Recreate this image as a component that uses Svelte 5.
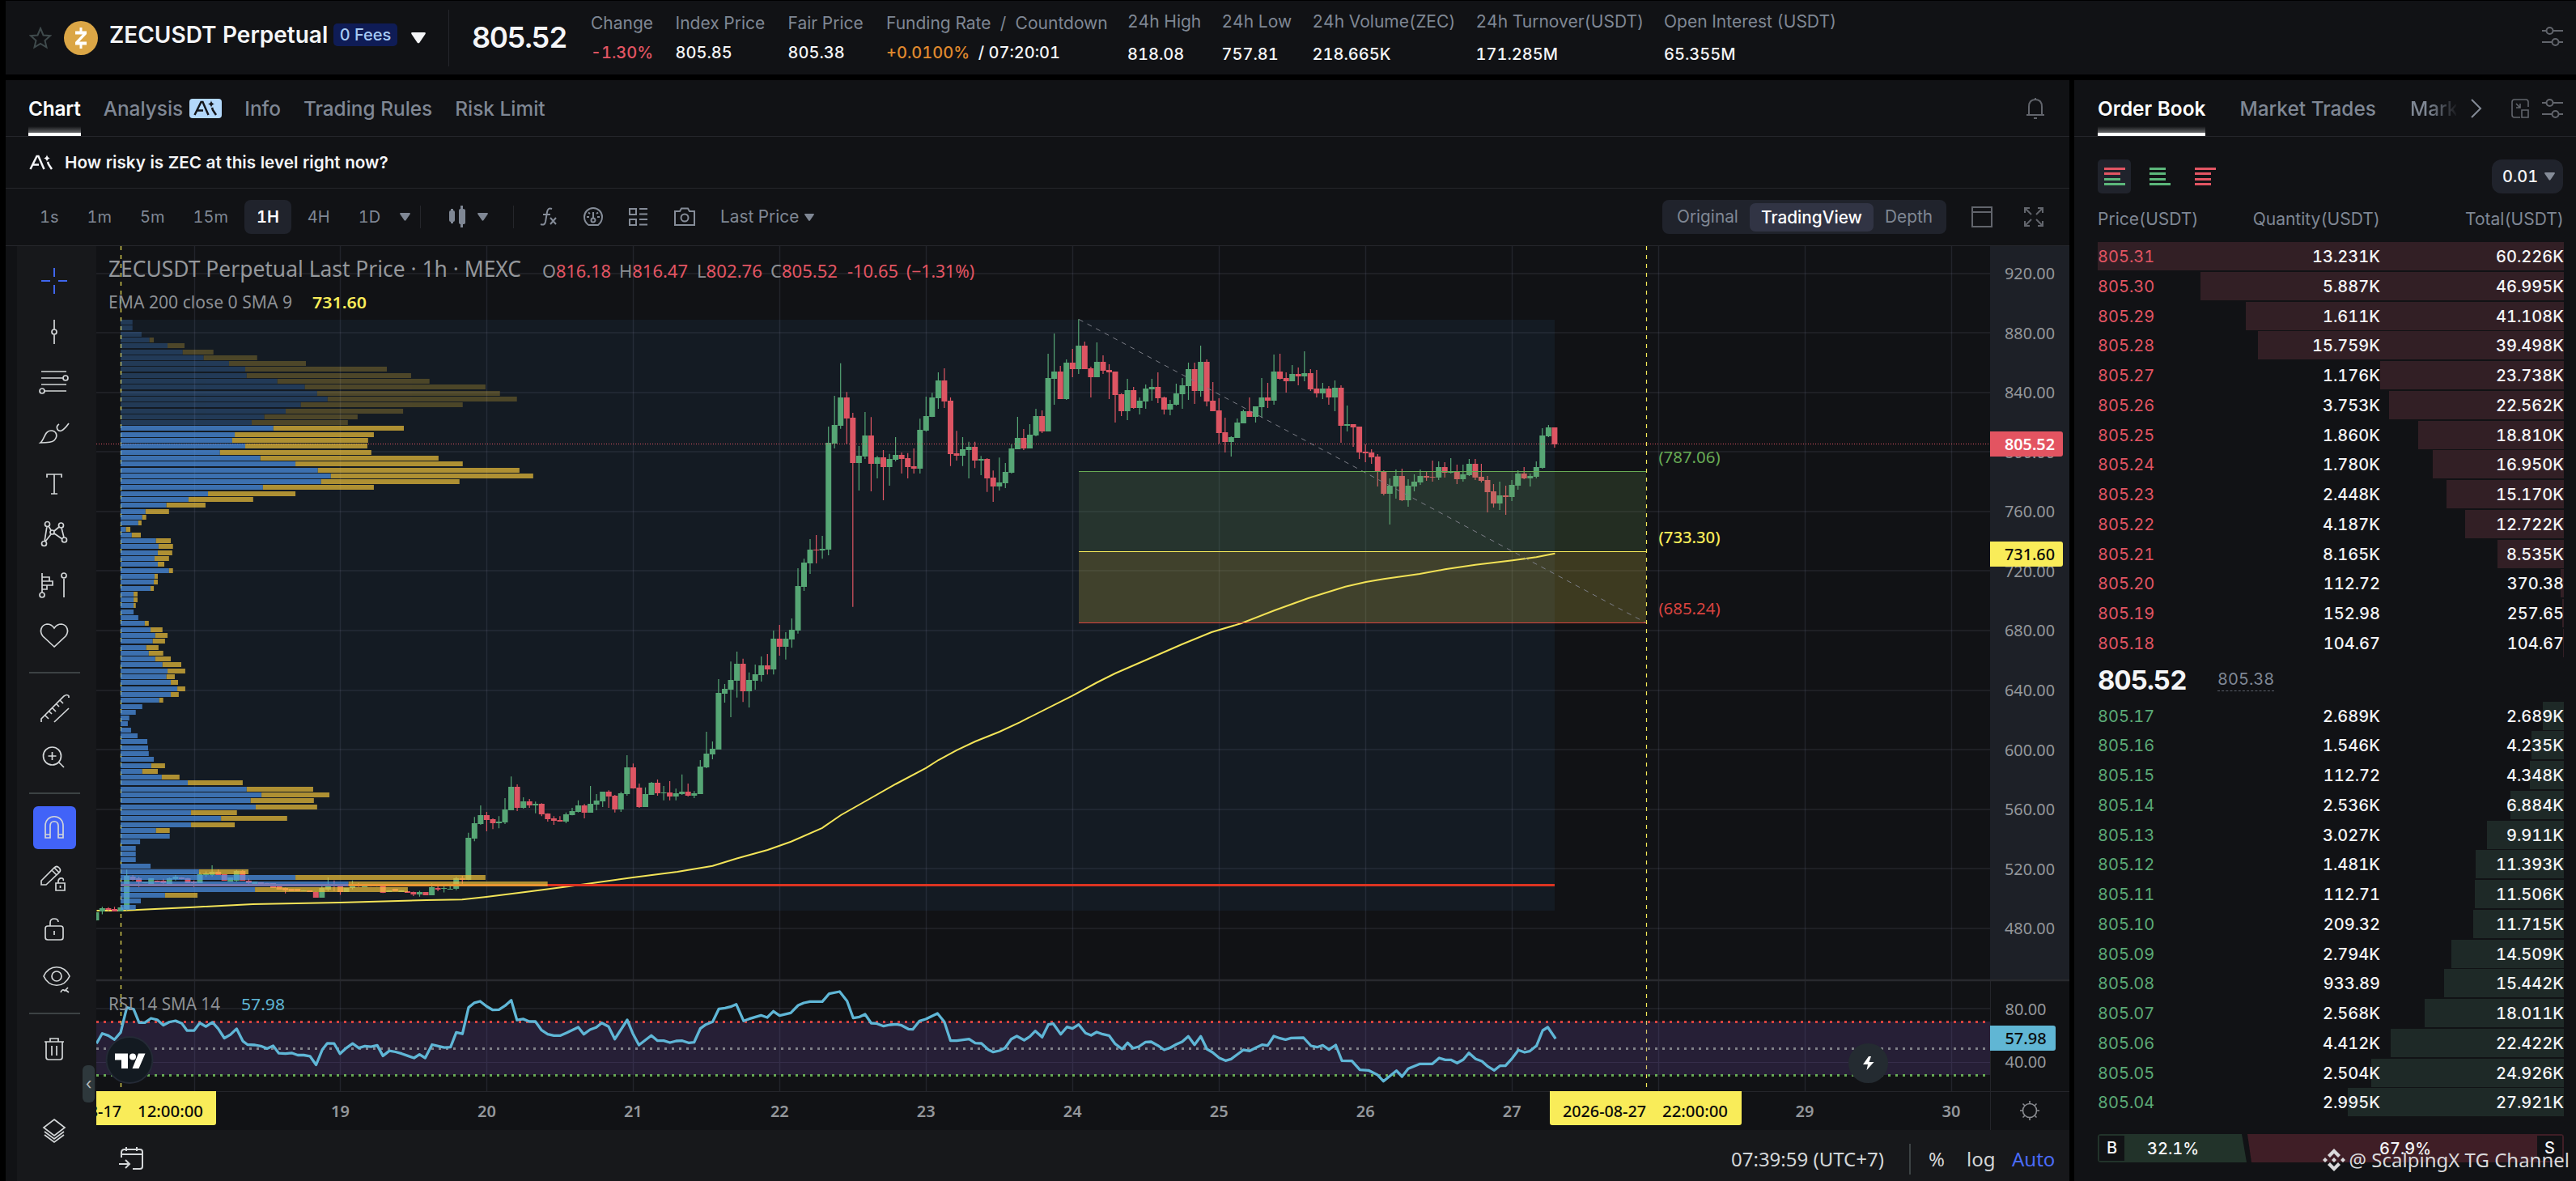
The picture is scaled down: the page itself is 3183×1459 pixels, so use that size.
<script lang="ts">
  type Bar = [string, number, number, number, number];

  const stats = [
    { label: "Change", value: "-1.30%", tone: "down" },
    { label: "Index Price", value: "805.85" },
    { label: "Fair Price", value: "805.38" },
    { label: "Funding Rate  /  Countdown", value: "  / 07:20:01", rate: "+0.0100%" },
    { label: "24h High", value: "818.08", wide: true },
    { label: "24h Low", value: "757.81", wide: true },
    { label: "24h Volume(ZEC)", value: "218.665K", wide: true },
    { label: "24h Turnover(USDT)", value: "171.285M", wide: true },
    { label: "Open Interest (USDT)", value: "65.355M", wide: true },
  ];

  const intervals = ["1s", "1m", "5m", "15m", "1H", "4H", "1D"];

  // price, quantity, total
  const asks = [
    ["805.31", "13.231K", "60.226K"],
    ["805.30", "5.887K", "46.995K"],
    ["805.29", "1.611K", "41.108K"],
    ["805.28", "15.759K", "39.498K"],
    ["805.27", "1.176K", "23.738K"],
    ["805.26", "3.753K", "22.562K"],
    ["805.25", "1.860K", "18.810K"],
    ["805.24", "1.780K", "16.950K"],
    ["805.23", "2.448K", "15.170K"],
    ["805.22", "4.187K", "12.722K"],
    ["805.21", "8.165K", "8.535K"],
    ["805.20", "112.72", "370.38"],
    ["805.19", "152.98", "257.65"],
    ["805.18", "104.67", "104.67"],
  ];
  const bids = [
    ["805.17", "2.689K", "2.689K"],
    ["805.16", "1.546K", "4.235K"],
    ["805.15", "112.72", "4.348K"],
    ["805.14", "2.536K", "6.884K"],
    ["805.13", "3.027K", "9.911K"],
    ["805.12", "1.481K", "11.393K"],
    ["805.11", "112.71", "11.506K"],
    ["805.10", "209.32", "11.715K"],
    ["805.09", "2.794K", "14.509K"],
    ["805.08", "933.89", "15.442K"],
    ["805.07", "2.568K", "18.011K"],
    ["805.06", "4.412K", "22.422K"],
    ["805.05", "2.504K", "24.926K"],
    ["805.04", "2.995K", "27.921K"],
  ];

  const amount = (s: string) =>
    s.endsWith("K") ? parseFloat(s) * 1000 : parseFloat(s);
  const deepest = Math.max(...[...asks, ...bids].map((r) => amount(r[2])));
  const depth = (s: string) => ((amount(s) / deepest) * 100).toFixed(2) + "%";

  // circle as a path, so that every icon is one path
  const ring = (x: number, y: number, r: number) =>
    `M${x - r} ${y}a${r} ${r} 0 1 0 ${2 * r} 0a${r} ${r} 0 1 0 ${-2 * r} 0`;

  const tools = [
    { name: "cross", d: "M4 20H15M25 20H36M20 4V15M20 25V36" },
    { name: "trend", d: "M20 5V17M20 23V35" + ring(20, 20, 3) },
    {
      name: "fib",
      d: "M4 7H35M4 15H31M4 23H35M8 31H35" + ring(34, 15, 3) + ring(5, 31, 3),
    },
    {
      name: "brush",
      d: "M3 32C8 28 8 17 16 17C23 17 25 24 20 29C17 32 10 32 3 32ZM26 9C21 12 24 19 29 17Q33 15 38 8",
    },
    { name: "text", d: "M11 12V8H29V12M20 8V32M16 32H24" },
    {
      name: "pattern",
      d:
        "M11 10L8 29M13 10L16 15M26 11L20 16M29 12L32 24M16 20L9 29M20 19L30 26" +
        ring(11.5, 7.5, 3) +
        ring(28.5, 9, 3) +
        ring(17.5, 17.5, 2.5) +
        ring(7.5, 31.5, 3) +
        ring(32.5, 27, 3),
    },
    {
      name: "forecast",
      d:
        "M5 5V29M5 10H14V15H5M5 15H18V20H5M5 20H11V25H5M32 12V35" +
        ring(5, 32, 3) +
        ring(32, 8, 3),
    },
    {
      name: "heart",
      d: "M20 34L6 21C1 15 4 7 11 6C15 6 18 8 20 11C22 8 25 6 29 6C36 7 39 15 34 21Z",
    },
    { name: "sep-a" },
    {
      name: "ruler",
      d: "M4 37V33L32 5Q36 2 38 5V7M20 37L38 20M9 29l4 4M14 24l3 3M18 20l4 4M23 15l3 3M27 10l4 4",
    },
    { name: "zoom", d: ring(17.5, 19, 11) + "M26 27l6 6M17.5 14v10M12.5 19h10" },
    { name: "sep-b" },
    {
      name: "magnet",
      d: "M9 33V18C9 3 31 3 31 18V33H25V18C25 11 15 11 15 18V33ZM9 29H15M25 29H31",
    },
    {
      name: "draw-lock",
      d: "M4 28V23L20 7L26 13L10 28ZM17 10L23 16M20 7Q23 4 26 7T26 13M22 26H33V35H22ZM25 26V23Q26 19 30 20Q32 21 31 23M27.500 29V32",
    },
    {
      name: "lock",
      d: "M12 16H28Q31 16 31 19V30Q31 33 28 33H12Q9 33 9 30V19Q9 16 12 16ZM15 16V12Q15 7 20 7T25 11M20 22V27",
    },
    {
      name: "eye",
      d: "M7 16C14 1 32 1 39 16C32 31 14 31 7 16Z" + ring(23, 16, 6) + "M28 36Q30 31 33 34L37 30M34 33L38 36",
    },
    { name: "sep-c" },
    {
      name: "trash",
      d: "M8 11H32M15 11V7H25V11M10 11V30Q10 33 13 33H27Q30 33 30 30V11M17 16V28M23 16V28",
    },
    {
      name: "layers",
      d: "M20 6L33 16L20 26L7 16ZM8 21L20 30L32 21M8 25L20 34L32 25",
    },
  ];

  // One candle per hour; index 0 is the 18th, 00:00.
  const DAY = 180.96;
  const HOUR = DAY / 24;
  const ORIGIN = 239.5;
  const days = Array.from({ length: 13 }, (_, i) => ORIGIN + i * DAY);
  const priceY = (p: number) => 337.5 + (920 - p) * 1.8395;
  const prices = [920, 880, 840, 800, 760, 720, 680, 640, 600, 560, 520, 480];

  // side, body top, body bottom, high, low
  const parse = (src: string): Bar[] =>
    src
      .trim()
      .split(/\s+/)
      .map((s) => {
        const n = s.slice(1).split(",").map(Number);
        return [s[0], n[0], n[1], n[2] ?? n[0], n[3] ?? n[1]];
      });

  const runs = [
    {
      start: -16,
      top: 760,
      scale: 2.243,
      bars: parse(`
        g823,846 g812,822,808,829 r812,816,809,820 r815,820,808,820 g810,821
        g722,815,704,818 r725,734,720,735 r730,740,725,753 g741,743 g729,744
        r735,740 r735,742,730,745 g730,744,727,746 g725,732,720,735 r726,732
        r728,742 r738,742,735,753 g717,742,712,742 g716,721,710,725
        g711,720,693,724 r711,720,704,720 r718,736 g727,738 g709,735,706,738
        r709,735,706,735 r736,742,730,746 g738,745 r740,744 r742,747 r743,755
        r752,760 r757,762,755,771 r759,764 r759,765 g762,764 r763,767 r766,783
        g757,783,750,783 g750,760,727,765 r748,750,735,765 r748,767,745,775
        g757,766 g748,757,735,760 r748,752,742,753 g748,753 r748,752 g745,752
        r752,769,750,770 g762,767 r759,764 g762,766 r764,769 r767,773,766,778
        g768,773,764,780 r768,775 g754,775,743,775 r755,760,750,765
        g757,759,750,768 g758,759,744,759 g729,759,725,762 r730,733,722,745
        g617,734,603,734`),
    },
    {
      start: 46,
      top: 380,
      scale: 2.063,
      bars: parse(`
        g1314,1353,1298,1360 g1294,1316,1269,1318 r1294,1306,1285,1335
        r1304,1314,1302,1329 g1310,1314,1296,1327 g1279,1312,1250,1316
        g1221,1281,1195,1281 r1221,1275,1215,1283 g1259,1275,1248,1277
        r1259,1269,1252,1275 g1265,1269,1259,1289 r1265,1292,1263,1296
        r1289,1304,1289,1310 r1302,1308,1296,1318 r1306,1310,1296,1310
        g1292,1310,1287,1314 g1283,1294,1275,1294 g1269,1285,1256,1287
        r1269,1287,1265,1302 g1265,1287,1219,1287 g1256,1267,1240,1281
        g1234,1259,1234,1273 r1234,1246,1230,1275 r1244,1279,1242,1287
        g1238,1279,1234,1285 g1172,1240,1141,1244 r1172,1226,1162,1226
        r1223,1273,1213,1275 g1240,1273,1223,1273 g1211,1242,1209,1242
        r1211,1238,1203,1244 g1236,1238,1219,1256 r1236,1246,1207,1256
        g1238,1246,1226,1256 g1234,1240,1190,1242 r1234,1244,1213,1246
        g1238,1244,1232,1250 g1170,1240,1153,1240 g1137,1172,1081,1174
        g1124,1139,1106,1151 g982,1126,947,1126 g972,984,959,1007
        g949,974,902,1044 g908,951,877,994 r908,978,895,1005 g949,978,930,1019
        g935,951,910,974 g912,937,889,953 r912,922,883,935 g844,922,823,935
        r844,864,809,887 g844,864,827,897 g821,846,792,867 g710,823,664,831
        g650,712,640,722 g617,652,590,679 r617,619,580,652 g615,619,582,640
        g345,617,303,631 g299,347,225,359 g229,301,142,309 r229,283,215,348
        r281,396,268,763 g378,396,353,466 g326,380,266,386 r326,398,279,468
        g382,398,378,435 r382,406,363,491 g386,406,373,454 g375,388,330,392
        r375,386,369,423 r384,406,371,435 r404,411,359,423 g312,411,283,423
        g276,314,227,316 g229,279,217,279 g186,231,165,258 r186,239,155,256
        r237,373,229,404 r371,378,314,390 g361,378,330,404 g355,363,342,435
        r355,390,342,409 g386,390,378,427 r386,435,384,470 r433,456,415,495
        g446,456,382,466 g419,448,396,460 g359,421,348,423`),
    },
    {
      start: 135,
      top: 360,
      scale: 3,
      bars: parse(`
        g543,585,465,585 r543,582,510,588 g531,582,492,582 g462,534,435,537
        r462,519,441,525 g321,519,231,519 g297,324,156,420 r297,399,276,399
        g264,399,252,402 r264,288,213,318 g201,288,103,306 r201,288,186,288
        r285,318,279,393 g261,318,189,318 r261,294,237,306 r291,300,270,399
        r297,384,297,486 r381,444,378,462 g366,444,324,477 r366,432,354,435
        g405,432,393,456 g360,408,345,435 g354,363,324,405 r354,396,300,414
        r393,438,390,456 g417,438,402,459 g378,420,342,423 g348,381,321,435
        g288,351,264,402 r288,369,264,417 g261,369,201,390 r261,408,252,426
        r405,444,336,444 r441,525,396,564 r522,558,468,597 g540,558,537,612
        g486,543,471,543 g444,489,438,489 r444,465,393,465 g426,465,426,486
        g393,429,321,468 r393,405,339,432 g297,405,234,420 r297,324,231,327
        r321,333,300,375 g306,333,273,333 r306,315,282,348 g303,315,222,333
        r303,363,288,369 r360,378,291,393 g360,378,339,399 r360,393,351,420
        g357,393,330,444 r357,498,348,561 g492,498,423,519 r492,504,492,576
        r501,597,501,621 r594,600,567,633 r597,615,585,639 r612,669,603,723
        r666,750,663,756 g720,750,693,864 g684,723,660,768 r684,774,657,777
        g720,774,696,798 g705,723,678,741 g684,708,660,717 r684,690,669,702
        r686,690,627,705 g651,690,630,699 r651,672,633,690 g668,672,618,675
        r669,696,642,714 g678,696,642,705 g639,681,621,684 r639,690,621,699
        r687,702,639,708 r699,744,684,819 r741,786,714,801 g756,786,705,810
        r756,762,720,828 g717,762,699,777 g675,720,663,735 r675,693,651,696
        g684,693,675,723 g651,687,630,693 g534,654,507,657 g504,537,495,540
        r504,567,504,579`),
    },
  ];

  const candles = runs.flatMap((run) =>
    run.bars.map(([side, top, bottom, high, low], i) => ({
      x: ORIGIN + (run.start + i) * HOUR,
      up: side === "g",
      top: Math.round(run.top + top / run.scale),
      bottom: Math.round(run.top + bottom / run.scale),
      high: run.top + high / run.scale,
      low: run.top + low / run.scale,
    })),
  );

  // Volume profile rows: up volume end, total end
  const profile = `367 367 392 414,426 464,511 506,591 564,712 634,847 679,1071
    683,1138 768,1189 844,1344 878,1384 907,1431 833,1281 791,1116 732,990
    697,963 757,1118 650,1035 643,1019 679,1017 609,1028 721,1214 818,1281
    880,1438 916,1476 889,1272 728,1035 576,818 522,701 461,569 403,468 394,405
    383,392 349,361 365,390 432,473 439,479 437,477 428,468 437,455 468,479
    428,437 426,437 417,426 370,381 370,381 370,376 370 383 401,412 417,450
    430,464 423,457 405,439 412,452 430,473 450,502 464,513 461,484 473,493
    491,513 473,495 441,452 394 376 358 354 363 381 408 410 412 426 419,457
    394,437 448,497 520,672 683,867 724,912 694,869 708,878 529,656 612,795
    529,650 432,470 470 388 376 376 376 417 551,688 818,1344 965,1516 706,1129
    457,547 390 376`
    .split(/\s+/)
    .map((s, i) => {
      const [up, total] = s.split(",").map((n) => (Number(n) - 334) / 2.24);
      return {
        y: Math.round(395 + i * 7.3),
        up,
        down: (total ?? up) - up,
        area: i >= 18,
      };
    });

  const ema = `119.500,1125 149,1125 239,1120.700 312.500,1117 420,1115 527,1112
    571,1111.300 601,1108 649,1102 703,1095 782,1084 837,1077 880.500,1069.800
    910.500,1060.500 948.500,1050 977.500,1039.700 1016,1022.800 1039,1007
    1069,990 1107,968.500 1144.500,948.600 1159.500,939 1182,926.800 1205,916
    1235,904 1260,892.300 1325.400,859.300 1355.700,843 1377.700,832
    1423.700,812 1460.400,796 1497,781 1533.900,770 1575,754 1616.500,739
    1662.400,724.700 1687.700,719 1709.700,715.300 1754.200,709 1785.500,703.300
    1823,697.700 1869,692.300 1898.400,688.300 1921.400,683.700`;

  const trace = (x: number, y: number, sx: number, sy: number, src: string) =>
    src
      .trim()
      .split(/\s+/)
      .map((s) => s.split(",").map(Number))
      .map(([px, py]) => `${(x + px / sx).toFixed(1)},${(y + py / sy).toFixed(1)}`)
      .join(" ");

  const rsi = [
    trace(0, 760, 2.24, 2.243, `267,1187 283,1159 300,1165 317,1176 334,1156
      351,1087 370,1092 385,1129 401,1129 418,1117 435,1121 452,1136 469,1127
      486,1124 503,1131 518,1151 537,1151 553,1130 570,1140 588,1128 604,1146
      621,1172 638,1162 655,1146 672,1180 685,1190 706,1191 722,1194 739,1201
      756,1193 772,1214 790,1215 807,1213 824,1219 841,1219 858,1222 875,1246
      892,1204 906,1186 925,1187 941,1215 959,1199 976,1187 993,1199 1010,1194
      1027,1196 1044,1192 1060,1221 1078,1207 1095,1210 1112,1215 1129,1221
      1146,1227 1161,1217 1177,1227 1196,1190 1213,1194 1230,1198 1247,1197
      1263,1156 1280,1160 1297,1087 1313,1074 1329,1070 1347,1084 1364,1094
      1381,1093 1398,1082 1415,1067 1431,1122 1448,1119 1465,1126 1482,1126
      1499,1150 1516,1161 1533,1165 1550,1165`),
    trace(700, 1060, 1.3067, 3, `0,648 19,627 28,653 38,636 48,628 57,611 68,625
      78,671 98,600 107,650 117,693 137,658 147,677 157,677 167,684 177,678
      187,677 197,685 206,683 216,632 225,617 236,607 246,559 256,556 265,551
      274,542 286,604 295,596 314,583 324,591 334,568 344,584 362,574 374,546
      383,537 393,532 413,532 424,503 441,495 453,530 463,593 473,589 482,579
      492,612 500,613 512,623 522,618 533,616 541,620 552,634 559,635 570,604
      580,597 599,576 610,607 620,677 630,677 650,671 660,686 670,687 681,710
      689,719 699,714 708,704 718,671 727,660 739,675 748,662 757,641 768,664
      778,617 786,614 798,653 808,626 817,632 827,617 838,649 847,657 856,645
      866,653 876,658 886,689 897,708 906,685 915,705 924,699 935,682 944,681
      955,695 965,711 975,703 985,690 994,681 1004,661 1014,692 1024,661
      1034,708 1043,720 1054,741 1064,751 1073,745 1093,711 1103,715 1114,702
      1123,692 1132,695 1142,660 1152,668 1161,673 1170,667 1190,666 1202,696
      1212,701 1221,694 1231,710 1242,693 1252,751 1268,752 1281,785 1295,787
      1309,803 1319,827 1340,788 1349,810 1359,781 1378,763 1398,763 1409,741
      1419,748 1428,748 1438,760 1448,747 1457,722 1468,745 1478,753 1488,773
      1498,787 1507,770 1516,770 1527,742 1537,712 1547,720 1555,716 1566,696`),
    trace(1800, 1180, 2.063, 3, "203,337 219,279 232,267 252,310"),
  ].join(" ");

  const fib = [
    { y: 582.5, text: "(787.06)", color: "#68ab55", base: 572 },
    { y: 681.5, text: "(733.30)", color: "#f9ec59", base: 671, strong: true },
    { y: 769.5, text: "(685.24)", color: "#d8433f", base: 759 },
  ];

  const legend = [
    { k: "O", v: "816.18", x: 670, w: 85 },
    { k: "H", v: "816.47", x: 765, w: 85 },
    { k: "L", v: "802.76", x: 861, w: 81 },
    { k: "C", v: "805.52", x: 952, w: 83 },
    { k: "", v: "-10.65", x: 1047, w: 63 },
    { k: "", v: "(−1.31%)", x: 1120, w: 84 },
  ];
</script>

{#snippet caret(size: number)}
  <svg class="caret" width={size} height={size * 0.75} viewBox="0 0 12 9">
    <path d="M1 0H11Q12.500 0 11.600 1.500L7 8.300Q6 9.500 5 8.300L.4 1.500Q-.5 0 1 0Z" fill="currentColor" />
  </svg>
{/snippet}

{#snippet sliders()}
  <svg width="28" height="28" viewBox="0 0 28 28" class="line">
    <path d={"M1 7H7M14 7H27M1 21H14M21 21H27" + ring(10.5, 7, 4) + ring(17.5, 21, 4)} />
  </svg>
{/snippet}

{#snippet aiMark(w: number)}
  <svg width={w} height={w * 0.62} viewBox="0 0 30 18.6" fill="none" stroke="currentColor" stroke-width="2.500">
    <path d="M1.500 18L9.500 2H11.500L18.500 18M5 12.500H12" />
    <path d="M23 9L24 12L28 18" />
    <path d="M22 0Q22.500 4 26 4.500Q22.500 5 22 9Q21.500 5 18 4.500Q21.500 4 22 0Z" fill="currentColor" stroke="none" />
  </svg>
{/snippet}

<div class="page">
  <header>
    <div class="symbol">
      <svg class="star" width="28" height="28" viewBox="0 0 28 28">
        <path d="M14 2L17.500 10.500L26 11.200L19.500 17L21.500 25.500L14 21L6.500 25.500L8.500 17L2 11.200L10.500 10.500Z" />
      </svg>
      <svg width="42" height="42" viewBox="0 0 42 42">
        <circle cx="21" cy="21" r="21" fill="#dba646" />
        <path d="M14 12.500H28V16L19 25.500H28V29.500H14V26L23 16.500H14ZM19.500 8H22.500V13H19.500ZM19.500 29H22.500V34H19.500Z" fill="#fff" />
      </svg>
      <h1>ZECUSDT Perpetual</h1>
      <span class="fees">0 Fees</span>
      {@render caret(18)}
    </div>
    <strong class="last">805.52</strong>
    <dl>
      {#each stats as s}
        <div class:wide={s.wide}>
          <dt>{s.label}</dt>
          <dd class={s.tone}>{#if s.rate}<span class="rate">{s.rate}</span>{/if}{s.value}</dd>
        </div>
      {/each}
    </dl>
    <div class="header-tools">{@render sliders()}</div>
  </header>

  <div class="body">
    <section class="market">
      <nav class="tabs">
        <span class="tab active">Chart</span>
        <span class="tab">Analysis <i class="ai">{@render aiMark(30)}</i></span>
        <span class="tab">Info</span>
        <span class="tab">Trading Rules</span>
        <span class="tab">Risk Limit</span>
        <svg class="line bell" width="28" height="28" viewBox="0 0 28 28">
          <path d="M3 22H25M6 22V12Q6 3 14 3T22 12V22M14 1V3M12 26H16" />
        </svg>
      </nav>

      <div class="question">
        {@render aiMark(30)}
        <span>How risky is ZEC at this level right now?</span>
      </div>

      <div class="toolbar">
        <div class="intervals">
          {#each intervals as t}
            <span class:on={t === "1H"}>{t}</span>
          {/each}
          {@render caret(13)}
        </div>
        <div class="kind">
          <svg width="22" height="28" viewBox="0 0 22 28" fill="currentColor">
            <path d="M0 8Q0 6 2 6V4H5V6Q7 6 7 8V18Q7 20 5 20V22H2V20Q0 20 0 18ZM12 6Q12 4 14 4V0H17V4Q20 4 20 6V21Q20 23 17 23V27H14V23Q12 23 12 21Z" />
          </svg>
          {@render caret(13)}
        </div>
        <div class="actions">
          <svg width="24" height="26" viewBox="0 0 24 26">
            <path d="M16 3Q11 1 10 7L8 19Q7 24 2 22M5 10H14M14 14L21 22M21 14L14 22" />
          </svg>
          <svg width="26" height="26" viewBox="0 0 26 26">
            <path d={"M7 23H19Q24 19 24 13A11 11 0 1 0 2 13Q2 19 7 23M13 14V7M5 13H8M18 13H21M7 7.500L9 9M19 7.500L17 9" + ring(13, 17, 2.5)} />
          </svg>
          <svg width="26" height="26" viewBox="0 0 26 26">
            <path d="M2 3H10V10H2ZM2 16H10V23H2ZM14 3H24M14 9.500H24M14 16H24M14 22.500H24" />
          </svg>
          <svg width="28" height="26" viewBox="0 0 28 26">
            <path d={"M2 6H8L10 2.500H18L20 6H26V23H2Z" + ring(14, 14, 4.5)} />
          </svg>
          <span>Last Price</span>
          {@render caret(12)}
        </div>
        <div class="views">
          <span>Original</span><span class="on">TradingView</span><span>Depth</span>
        </div>
        <svg class="line" width="28" height="28" viewBox="0 0 28 28">
          <path d="M2 2H26V26H2ZM2 8H26" />
        </svg>
        <svg class="line expand" width="26" height="26" viewBox="0 0 26 26">
          <path d="M2 8V2H8M2 2L10 10M18 2H24V8M24 2L16 10M2 18V24H8M2 24L10 16M24 18V24H18M24 24L16 16" />
        </svg>
      </div>

      <div class="workspace">
        <aside>
          {#each tools as tool}
            {#if tool.d}
              <span class="tool {tool.name}">
                <svg width="40" height="40" viewBox="0 0 40 40"><path d={tool.d} /></svg>
              </span>
            {:else}
              <hr class={tool.name} />
            {/if}
          {/each}
          <span class="handle">‹</span>
        </aside>

        <div class="chart">
          <svg class="plot" width="2438" height="1092" viewBox="119 304 2438 1092">
            <rect x="149" y="395" width="1772" height="730" fill="#141b23" />

            <g class="grid">
              {#each days as x}
                <path d="M{Math.round(x)}.500 304V1348" />
              {/each}
              {#each prices as p}
                <path d="M119 {Math.round(priceY(p))}H2459" />
              {/each}
              <path d="M119 1246H2459" />
            </g>

            <path d="M149.500 304V1348M2034.500 304V1348" stroke="#f9ec59" stroke-width="1.200" stroke-dasharray="5 6" />

            <polyline points={ema} fill="none" stroke="#f3e458" stroke-width="2" />

            {#each candles as c}
              <path
                class={c.up ? "up" : "down"}
                d="M{(c.x - 0.6).toFixed(1)} {c.high.toFixed(1)}h1.200V{c.low.toFixed(1)}h-1.200ZM{(c.x - 3.5).toFixed(1)} {c.top}h7V{Math.max(c.bottom, c.top + 1)}h-7Z"
              />
            {/each}

            <path d="M119 548.500H2459" stroke="#e25563" stroke-dasharray="1 2" />
            <path d="M149 1093.500H1921" stroke="#dc3421" stroke-width="3" />

            {#each profile as row}
              <g opacity={row.area ? 0.7 : 0.26}>
                <rect x="149" y={row.y} width={row.up} height="6" fill="#4d94eb" />
                <rect x={149 + row.up} y={row.y} width={row.down} height="6" fill="#f0c23b" />
              </g>
            {/each}

            <rect x="1333" y="582" width="701" height="99" fill="rgba(110, 157, 90, 0.2)" />
            <rect x="1333" y="681" width="701" height="88" fill="rgba(240, 222, 80, 0.2)" />
            <path d="M1333 394.500L2034 769.500" stroke="#7b7d86" stroke-dasharray="6 6" />
            {#each fib as f}
              <path d="M1333 {f.y}H2034" stroke={f.color} stroke-width="1.200" />
              <text x="2049.500" y={f.base} textLength="76" lengthAdjust="spacingAndGlyphs" fill={f.color} font-weight={f.strong ? 500 : 400}>{f.text}</text>
            {/each}

            <text class="title" x="134" y="342" textLength="510" lengthAdjust="spacingAndGlyphs">ZECUSDT Perpetual Last Price · 1h · MEXC</text>
            {#each legend as l}
              <text class="ohlc" x={l.x} y="342.500" textLength={l.w} lengthAdjust="spacingAndGlyphs">{l.k}<tspan fill="#e25563">{l.v}</tspan></text>
            {/each}
            <text class="study" x="134" y="381" textLength="227" lengthAdjust="spacingAndGlyphs">EMA 200 close 0 SMA 9</text>
            <text x="386" y="381" textLength="67" lengthAdjust="spacingAndGlyphs" fill="#f9ec59" font-weight="600">731.60</text>

            <!-- RSI pane -->
            <path d="M119 1211H2557" stroke="#292a2e" stroke-width="2.500" />
            <rect x="119" y="1262" width="2340" height="66" fill="#6b4da5" fill-opacity="0.23" />
            <path d="M119 1312.500H2459" stroke="#352d4a" />
            <g stroke-width="3" stroke-dasharray="3 6">
              <path d="M119 1262.500H2459" stroke="#d8433f" />
              <path d="M119 1295.500H2459" stroke="#7f8087" />
              <path d="M119 1328.500H2459" stroke="#68ab55" />
            </g>
            <polyline points={rsi} fill="none" stroke="#5fb6d6" stroke-width="3.300" stroke-linejoin="round" />
            <text class="study" x="134" y="1248" textLength="138" lengthAdjust="spacingAndGlyphs">RSI 14 SMA 14</text>
            <text x="298" y="1248" textLength="54" lengthAdjust="spacingAndGlyphs" fill="#5fb6d6">57.98</text>

            <circle cx="160" cy="1309.500" r="28.500" fill="#131a21" stroke="#242a36" stroke-width="2" />
            <path d="M142 1301.500H158V1320H150V1309.500H142ZM171 1301.500H179.500L171.500 1320H163.500Z" fill="#fff" />
            <circle cx="164" cy="1305.500" r="4" fill="#fff" />
            <circle cx="2308.500" cy="1313.500" r="24.500" fill="#242b31" />
            <path d="M2309 1305L2302 1315H2308L2306.500 1322L2315.500 1312H2309.500L2312 1305Z" fill="#fff" />

            <!-- Scales -->
            <rect x="2459" y="304" width="98" height="906" fill="#1d2027" />
            <path d="M119 1348.500H2557M2459.500 1212V1396" stroke="#24252a" />
            <g class="scale">
              {#each prices as p}
                <text x="2508" y={priceY(p) + 7.5} textLength="62" lengthAdjust="spacingAndGlyphs">{p.toFixed(2)}</text>
              {/each}
              <text x="2503" y="1254">80.00</text>
              <text x="2503" y="1319">40.00</text>
            </g>
            <path d="M2459 533H2546Q2549 533 2549 536V561Q2549 564 2546 564H2459Z" fill="#e35461" />
            <path d="M2459 669H2546Q2549 669 2549 672V697Q2549 700 2546 700H2459Z" fill="#f9ec59" />
            <path d="M2459 1267H2537Q2540 1267 2540 1270V1295Q2540 1298 2537 1298H2459Z" fill="#60b6d4" />
            <g class="tags">
              <text x="2508" y="556" fill="#fff" textLength="62" lengthAdjust="spacingAndGlyphs" font-weight="600">805.52</text>
              <text x="2508" y="692" textLength="62" lengthAdjust="spacingAndGlyphs">731.60</text>
              <text x="2503" y="1290">57.98</text>
            </g>

            <g class="dates">
              {#each days as x, i}
                {#if i > 0 && i !== 10}
                  <text {x} y="1380">{18 + i}</text>
                {/if}
              {/each}
            </g>
            <path d="M30 1348H267V1387Q267 1390 264 1390H30Z" fill="#f9ec59" />
            <path d="M1915 1348H2152V1387Q2152 1390 2149 1390H1918Q1915 1390 1915 1387Z" fill="#f9ec59" />
            <g class="stamp">
              <text x="47" y="1380" textLength="103" lengthAdjust="spacingAndGlyphs">2026-08-17</text>
              <text x="170" y="1380" textLength="81" lengthAdjust="spacingAndGlyphs">12:00:00</text>
              <text x="1931" y="1380" textLength="103" lengthAdjust="spacingAndGlyphs">2026-08-27</text>
              <text x="2054" y="1380" textLength="81" lengthAdjust="spacingAndGlyphs">22:00:00</text>
            </g>
            <path
              d={ring(2508, 1372, 8.5) +
                "M2508 1360V1363M2508 1381V1384M2496 1372H2499M2517 1372H2520M2499.500 1363.500L2502 1366M2514 1378L2516.500 1380.500M2499.500 1380.500L2502 1378M2514 1366L2516.500 1363.500"}
              fill="none"
              stroke="#8a8c91"
              stroke-width="1.600"
            />
          </svg>

          <div class="bottom">
            <svg width="32" height="30" viewBox="0 0 32 30">
              <path d="M4 13V7Q4 3 8 3H27Q30 3 30 6V24Q30 27 27 27H18M4 9H30M10 0V5M23 0V5M1 21H14M9 16L14 21L9 26" />
            </svg>
            <span class="clock">07:39:59 (UTC+7)</span>
            <i></i>
            <span class="percent">%</span>
            <span class="log">log</span>
            <span class="auto">Auto</span>
          </div>
        </div>
      </div>
    </section>

    <section class="book">
      <nav class="tabs">
        <span class="tab active">Order Book</span>
        <span class="tab">Market Trades</span>
        <span class="tab cut">Mark</span>
        <svg class="chevron" width="24" height="26" viewBox="0 0 24 26">
          <path d="M4 2L15 13L4 24" />
        </svg>
        <svg class="line" width="24" height="26" viewBox="0 0 24 26">
          <path d="M12 24H5Q2 24 2 21V5Q2 2 5 2H19Q22 2 22 5V11M14 15H22V24H14ZM7 7L12 12M12 7V12H7" stroke-width="1.600" />
        </svg>
        {@render sliders()}
      </nav>

      <div class="modes">
        {#each ["rrgg", "gggg", "rrrr"] as mode, i}
          <span class="mode" class:on={i === 0}>
            {#each mode as c, row}
              <b class={c} class:long={(row === 0 && i !== 1) || (row === 3 && i !== 2)}></b>
            {/each}
          </span>
        {/each}
        <span class="step">0.01 {@render caret(13)}</span>
      </div>

      <div class="row heads">
        <span>Price(USDT)</span><span>Quantity(USDT)</span><span>Total(USDT)</span>
      </div>

      {#each asks as [price, qty, total]}
        <div class="row ask" style="--depth: {depth(total)}">
          <span>{price}</span><span>{qty}</span><span>{total}</span>
        </div>
      {/each}
      <div class="mid"><strong>805.52</strong><span>805.38</span></div>
      {#each bids as [price, qty, total]}
        <div class="row bid" style="--depth: {depth(total)}">
          <span>{price}</span><span>{qty}</span><span>{total}</span>
        </div>
      {/each}

      <div class="ratio">
        <div class="buy"><b>B</b><span>32.1%</span></div>
        <div class="sell"><span>67.9%</span><b>S</b></div>
        <div class="watermark">
          <svg width="28" height="28" viewBox="0 0 28 28" fill="currentColor">
            <path d="M14 0L22 8L19 11L14 6L9 11L6 8ZM3 11L6 14L3 17L0 14ZM14 11L17 14L14 17L11 14ZM25 11L28 14L25 17L22 14ZM9 17L14 22L19 17L22 20L14 28L6 20Z" />
          </svg>
          <span>@ ScalpingX TG Channel</span>
        </div>
      </div>
    </section>
  </div>
</div>

<style>
  :global(body) {
    margin: 0;
    background: #000;
  }
  .page {
    box-sizing: border-box;
    width: 3183px;
    height: 1459px;
    padding: 1px 0 0 7px;
    overflow: hidden;
    background: #000;
    color: #f4f5f7;
    font-family: Inter, "Liberation Sans", sans-serif;
    font-size: 20px;
    line-height: 24px;
    font-variant-numeric: tabular-nums;
  }
  svg {
    display: block;
    flex: none;
  }
  .line {
    fill: none;
    stroke: #62656c;
    stroke-width: 2;
  }
  header {
    display: flex;
    height: 91px;
    background: #111215;
  }
  .symbol {
    display: flex;
    align-items: center;
    box-sizing: border-box;
    width: 548px;
    height: 70px;
    margin: 11px 0;
    padding-left: 29px;
    border-right: 1px solid #25262b;
  }
  .star {
    margin-right: 15px;
    fill: none;
    stroke: #3f4a4c;
    stroke-width: 2;
  }
  h1 {
    width: 277px;
    margin: 0 0 9px 14px;
    font-size: 28px;
    line-height: 32px;
    font-weight: 600;
    white-space: nowrap;
  }
  .fees {
    box-sizing: border-box;
    width: 79px;
    margin: 0 17px 8px 0;
    border-radius: 5px;
    background: #0f1c56;
    color: #a6cbf5;
    font-weight: 500;
    line-height: 28px;
    text-align: center;
  }
  .last {
    width: 145px;
    padding-left: 28px;
    font-size: 36px;
    line-height: 90px;
    font-weight: 600;
    letter-spacing: -1.500px;
  }
  dl {
    display: grid;
    grid-template-columns: 104.500px 139px 121.500px 298px 116.500px 112px 202px 232.500px auto;
    margin: 0 0 0 2px;
  }
  dl div {
    padding-top: 16px;
  }
  dl .wide {
    padding-top: 14px;
  }
  dt,
  dd {
    white-space: pre;
  }
  dt {
    color: #7f8794;
    font-size: 21px;
  }
  dd {
    margin: 12px 0 0;
    font-weight: 500;
  }
  .wide dd {
    margin-top: 16px;
  }
  .rate {
    color: #e08a2e;
  }
  dd.down {
    color: #e25563;
  }
  .header-tools {
    margin: 30px 15px 0 auto;
  }
  .body {
    display: flex;
    gap: 6px;
    height: 1360px;
    margin-top: 7px;
  }
  .market {
    width: 2550px;
    background: #111215;
  }
  .tabs {
    display: flex;
    align-items: center;
    gap: 28px;
    height: 69px;
    padding: 0 28px;
    border-bottom: 1px solid #25262b;
    color: #7f8794;
    font-size: 24.400px;
    font-weight: 500;
    white-space: nowrap;
  }
  .tab {
    display: flex;
    align-items: center;
    gap: 8px;
    box-sizing: border-box;
    height: 69px;
  }
  .tab.active {
    border-bottom: 4px solid #fff;
    padding-top: 4px;
    background: linear-gradient(to top, rgba(255, 255, 255, 0.35), transparent 8px);
    color: #fff;
    font-weight: 600;
    letter-spacing: -0.2px;
  }
  .ai {
    display: grid;
    place-items: center;
    width: 40px;
    height: 24px;
    border-radius: 4px;
    background: #b3d8fb;
    color: #14161b;
  }
  .bell {
    margin-left: auto;
  }
  .question {
    display: flex;
    align-items: center;
    gap: 14px;
    height: 63px;
    padding-left: 29px;
    border-bottom: 1px solid #25262b;
    font-size: 20.700px;
    font-weight: 600;
  }
  .toolbar {
    display: flex;
    align-items: center;
    height: 70px;
    border-bottom: 1px solid #25262b;
    color: #7f8794;
    font-size: 20.800px;
  }
  .intervals {
    display: flex;
    align-items: center;
    gap: 5px;
    width: 485px;
    height: 28px;
    padding-left: 27px;
    border-right: 1px solid #25262b;
    font-size: 20px;
  }
  .intervals span {
    padding: 0 15px;
    border-radius: 8px;
    line-height: 42px;
  }
  .intervals .on {
    background: #20232c;
    color: #fff;
    font-weight: 600;
  }
  .intervals .caret {
    margin-left: 4px;
  }
  .kind {
    display: flex;
    align-items: center;
    gap: 13px;
    width: 79px;
    height: 28px;
    padding-left: 35px;
    border-right: 1px solid #25262b;
  }
  .actions {
    display: flex;
    align-items: center;
    margin-left: 31px;
    fill: none;
    stroke: #858c98;
    stroke-width: 2;
  }
  .actions svg {
    margin-right: 30px;
  }
  .actions span {
    fill: currentColor;
    stroke: none;
  }
  .actions .caret {
    margin: 0 0 0 7px;
    stroke: none;
  }
  .views {
    display: flex;
    align-items: center;
    justify-content: space-between;
    box-sizing: border-box;
    width: 351px;
    height: 42px;
    margin: 0 30px 0 auto;
    padding: 0 17px 0 18px;
    border-radius: 8px;
    background: #20232c;
  }
  .views .on {
    padding: 0 14px;
    border-radius: 7px;
    background: #313444;
    color: #fff;
    font-weight: 500;
    line-height: 35px;
  }
  .expand {
    margin: 0 31px 0 37px;
  }
  .workspace {
    display: flex;
    height: 1155px;
  }
  aside {
    display: flex;
    position: relative;
    flex-direction: column;
    align-items: center;
    box-sizing: border-box;
    width: 98px;
    margin-left: 14px;
    padding: 12px 6px 0 0;
    background: #17181b;
  }
  .tool {
    display: grid;
    place-items: center;
    width: 53px;
    height: 62.600px;
    fill: none;
    stroke: #d3d6d8;
    stroke-width: 1.700;
  }
  .tool.cross {
    stroke: #3f66ee;
    stroke-width: 2;
  }
  .tool.zoom,
  .tool.ruler {
    height: 60px;
  }
  .tool.magnet {
    height: 53px;
    margin: 5px 0;
    border-radius: 6px;
    background: #4163f8;
  }
  .tool.layers {
    margin-top: 39px;
  }
  hr {
    width: 63px;
    height: 2px;
    margin: 13px 0;
    border: 0;
    background: #3c4244;
  }
  hr.sep-b {
    margin: 14px 0 10px;
  }
  hr.sep-c {
    margin: 9px 0 12px;
  }
  /* sits over the right edge of the drawing tools */
  .handle {
    position: absolute;
    top: 1012px;
    right: 2px;
    width: 15px;
    border-radius: 6px;
    background: #2e383c;
    color: #b6bbbd;
    line-height: 46px;
    text-align: center;
  }
  .chart {
    width: 2438px;
  }
  .plot,
  .bottom {
    font-family: "Noto Sans", "Open Sans", sans-serif;
  }
  .plot {
    overflow: hidden;
    font-size: 20px;
  }
  .grid {
    fill: none;
    stroke: rgba(140, 146, 175, 0.14);
    stroke-width: 1.400;
  }
  .up {
    fill: #56a675;
  }
  .down {
    fill: #dd5563;
  }
  .title {
    fill: #94979b;
    font-size: 27px;
  }
  .study,
  .ohlc {
    fill: #8c8f94;
    font-size: 21px;
  }
  .scale,
  .tags,
  .dates {
    text-anchor: middle;
  }
  .scale {
    fill: #94979b;
  }
  .dates {
    fill: #94979b;
    font-weight: 600;
  }
  .stamp,
  .tags {
    fill: #0b0b0b;
    font-weight: 500;
  }
  .bottom {
    display: flex;
    align-items: center;
    box-sizing: border-box;
    height: 63px;
    padding: 8px 0 0 27px;
    background: #17181b;
    color: #d3d6d8;
    font-size: 24px;
    fill: none;
    stroke: none;
  }
  .bottom svg {
    stroke: #d3d6d8;
    stroke-width: 2;
  }
  .clock {
    width: 191px;
    margin-left: auto;
    white-space: nowrap;
  }
  .bottom i {
    width: 2px;
    height: 38px;
    margin: 0 22px 0 29px;
    background: #3c4244;
  }
  .percent {
    width: 47px;
  }
  .log {
    width: 56px;
  }
  .auto {
    width: 71px;
    color: #4a6bf8;
  }
  .book {
    box-sizing: border-box;
    width: 620px;
    background: #111215;
  }
  .book .tabs {
    gap: 0;
    padding: 0 15px 0 29px;
  }
  .book .tab {
    margin-right: 42px;
  }
  .book .tab.active {
    letter-spacing: 0;
  }
  .book .tab.cut {
    width: 57px;
    margin-right: 15px;
    background: linear-gradient(to right, #7f8794 40%, #1b1c20);
    background-clip: text;
    color: transparent;
  }
  .chevron {
    margin-right: auto;
    fill: none;
    stroke: #858c98;
    stroke-width: 2;
  }
  .book .line {
    margin-right: 14px;
  }
  .book .line:last-child {
    margin-right: 0;
  }
  .modes {
    display: flex;
    gap: 15px;
    margin: 28px 16px 0 29px;
  }
  .mode {
    display: flex;
    flex-direction: column;
    justify-content: center;
    gap: 3.300px;
    box-sizing: border-box;
    width: 41px;
    height: 42px;
    padding-left: 8px;
    border-radius: 5px;
  }
  .mode.on {
    background: #20232c;
  }
  .mode b {
    width: 20px;
    height: 3.200px;
  }
  .mode b.long {
    width: 26px;
  }
  .r {
    background: #e25563;
  }
  .g {
    background: #5cb77b;
  }
  .step {
    display: flex;
    align-items: center;
    justify-content: space-between;
    box-sizing: border-box;
    width: 88px;
    height: 42px;
    margin-left: auto;
    padding: 0 10px 0 13px;
    border-radius: 12px;
    background: #20232c;
    font-weight: 500;
  }
  .step :global(svg) {
    color: #858c98;
  }
  .row {
    display: grid;
    grid-template-columns: 120px 229px 227px;
    height: 36.750px;
    margin: 0 15px 0 29px;
    font-weight: 500;
    line-height: 36.750px;
    text-align: right;
  }
  .row span:first-child {
    text-align: left;
    font-weight: 400;
  }
  .heads {
    height: 46px;
    padding-top: 14px;
    color: #7f8794;
    font-size: 21px;
    font-weight: 400;
  }
  .ask {
    background: linear-gradient(to left, #321f25 var(--depth), transparent 0) no-repeat 0 0 / 100% 35px;
  }
  .bid {
    background: linear-gradient(to left, #1e2927 var(--depth), transparent 0) no-repeat 0 0 / 100% 35px;
  }
  .ask span:first-child {
    color: #e25563;
  }
  .bid span:first-child {
    color: #5cab77;
  }
  .mid {
    display: flex;
    align-items: center;
    height: 53px;
    padding-left: 29px;
  }
  .mid strong {
    width: 148px;
    font-size: 33px;
    font-weight: 700;
    letter-spacing: -1px;
  }
  .mid span {
    border-bottom: 1px dashed #5a5f69;
    color: #7f8794;
    line-height: 27px;
  }
  .ratio {
    display: flex;
    position: relative;
    height: 35px;
    margin: 20px 15px 0 29px;
    font-weight: 500;
  }
  .ratio div {
    display: flex;
    align-items: center;
  }
  .ratio b {
    width: 31px;
    height: 31px;
    margin: 0 2px;
    background: #111215;
    font-weight: 500;
    line-height: 31px;
    text-align: center;
  }
  .ratio .buy {
    width: 184px;
    margin-right: 1px;
    border-radius: 4px 0 0 4px;
    background: #22332a;
    clip-path: polygon(0 0, 178px 0, 100% 100%, 0 100%);
  }
  .buy span {
    margin-left: 26px;
  }
  .ratio .sell {
    flex: 1;
    border-radius: 0 4px 4px 0;
    background: #3f1e26;
    clip-path: polygon(0 0, 100% 0, 100% 100%, 5px 100%);
  }
  .sell span {
    width: 195px;
    margin-left: auto;
  }
  .sell b {
    margin-left: 0;
  }
  /* overlaps the ratio bar and runs past the panel padding */
  .ratio .watermark {
    position: absolute;
    top: 18px;
    right: -7px;
    gap: 5px;
    color: #d9d9db;
    font: 24px/28px "Noto Sans", sans-serif;
    white-space: nowrap;
  }
</style>
